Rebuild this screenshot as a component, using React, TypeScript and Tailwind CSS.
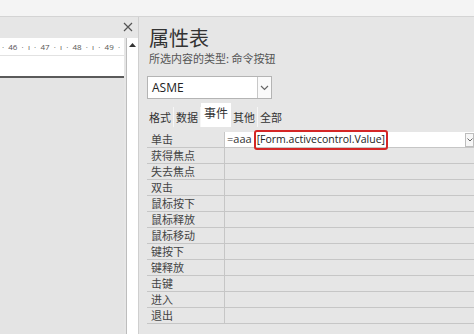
import React from "react";

const rows = ["单击", "获得焦点", "失去焦点", "双击", "鼠标按下", "鼠标释放", "鼠标移动", "键按下", "键释放", "击键", "进入", "退出"];

const cjk = { fontFamily: '"Noto Sans CJK SC", "Noto Sans", sans-serif' };
const latin = { fontFamily: '"Open Sans", "Noto Sans CJK SC", sans-serif' };

function Chevron() {
  return (
    <svg width="9" height="6" viewBox="0 0 9 6">
      <path d="M1 1 L4.5 4.5 L8 1" fill="none" stroke="#666" strokeWidth="1.2" />
    </svg>
  );
}

const ruler = ["·", "46", "·", "ı", "·", "47", "·", "ı", "·", "48", "·", "ı", "·", "49", "·"];

export default function App() {
  return (
    <div className="w-[474px] h-[334px] overflow-hidden flex flex-col bg-[#e6e6e6] text-[#333]" style={cjk}>
      <div className="h-[17px] shrink-0 bg-[#f4f4f4] border-b border-[#d4d4d4]" />
      <div className="flex flex-1 min-h-0">
        {/* left pane */}
        <div className="w-[139px] shrink-0 flex flex-col border-r border-[#cfcfcf]">
          <div className="h-[20px] shrink-0 flex items-center justify-end pr-[5px]">
            <svg width="10" height="10" viewBox="0 0 10 10">
              <path d="M1 1 L9 9 M9 1 L1 9" stroke="#555" strokeWidth="1.2" />
            </svg>
          </div>
          <div className="flex flex-1 min-h-0">
            <div className="flex-1 flex flex-col pt-[1px]">
              <div className="h-[18px] bg-white border-b border-[#e2e2e2] flex items-center justify-between pl-[2px] pr-[4px] text-[8px] text-[#555] whitespace-nowrap overflow-hidden" style={latin}>
                {ruler.map((t, i) => (
                  <span key={i}>{t}</span>
                ))}
              </div>
              <div className="h-[20px] bg-white" />
              <div className="h-[2px] bg-[#5a5a5a]" />
              <div className="flex-1 bg-[#e4e4e4]" />
            </div>
            <div className="w-[12px] ml-[2px] mt-[1px] bg-white border-l border-[#bdbdbd] flex flex-col items-center">
              <div className="pt-[5px]">
                <svg width="7" height="4" viewBox="0 0 7 4">
                  <path d="M0 4 L3.5 0 L7 4 Z" fill="#333" />
                </svg>
              </div>
            </div>
          </div>
        </div>
        {/* right pane */}
        <div className="flex-1 flex flex-col pl-[8px] min-w-0">
          <div className="pl-[2px] pt-[9px] text-[20px] leading-[24px] text-[#333]">属性表</div>
          <div className="pl-[2px] pt-[1px] text-[11px] leading-[14px] text-[#555]">所选内容的类型: 命令按钮</div>
          <div className="mt-[11px] w-[125px] h-[23px] bg-white border border-[#b4b4b4] flex items-center">
            <span className="flex-1 pl-[4px] text-[12px] text-[#222]" style={latin}>ASME</span>
            <div className="w-[14px] h-[21px] border-l border-[#c8c8c8] flex items-center justify-center bg-[#fafafa]">
              <Chevron />
            </div>
          </div>
          <div className="mt-[4px] flex items-end h-[24px] text-[11px] text-[#333]">
            <div className="px-[2px] h-[20px] flex items-center border-r border-[#f6f6f6]">格式</div>
            <div className="px-[2px] h-[20px] flex items-center border-r border-[#f6f6f6]">数据</div>
            <div className="px-[3px] h-[24px] flex items-center bg-white text-[12px] pb-[4px]">事件</div>
            <div className="px-[2px] h-[20px] flex items-center border-r border-[#f6f6f6]">其他</div>
            <div className="px-[2px] h-[20px] flex items-center">全部</div>
          </div>
          <div className="mt-[5px] flex flex-col">
            {rows.map((r, i) => (
              <div key={r} className="flex h-[16px] border-b border-[#c6c6c6]">
                <div className="w-[78px] shrink-0 border-r border-[#c6c6c6] pl-[4px] text-[11px] leading-[15px] text-[#444]">{r}</div>
                {i === 0 ? (
                  <div className="flex-1 bg-white flex items-center relative text-[11px] text-[#333]" style={latin}>
                    <span className="pl-[2px]">=aaa</span>
                    <span className="ml-[2px] h-[20px] -my-[2px] px-[1px] border-2 border-[#d42626] rounded-[3px] flex items-center leading-none text-[10.5px] text-[#222]">[Form.activecontrol.Value]</span>
                    <div className="ml-auto w-[9px] h-[14px] border border-[#bdbdbd] flex items-center justify-center bg-[#f6f6f6]">
                      <svg width="6" height="4" viewBox="0 0 6 4"><path d="M0.5 0.5 L3 3 L5.5 0.5" fill="none" stroke="#666" /></svg>
                    </div>
                  </div>
                ) : (
                  <div className="flex-1" />
                )}
              </div>
            ))}
          </div>
        </div>
      </div>
    </div>
  );
}
